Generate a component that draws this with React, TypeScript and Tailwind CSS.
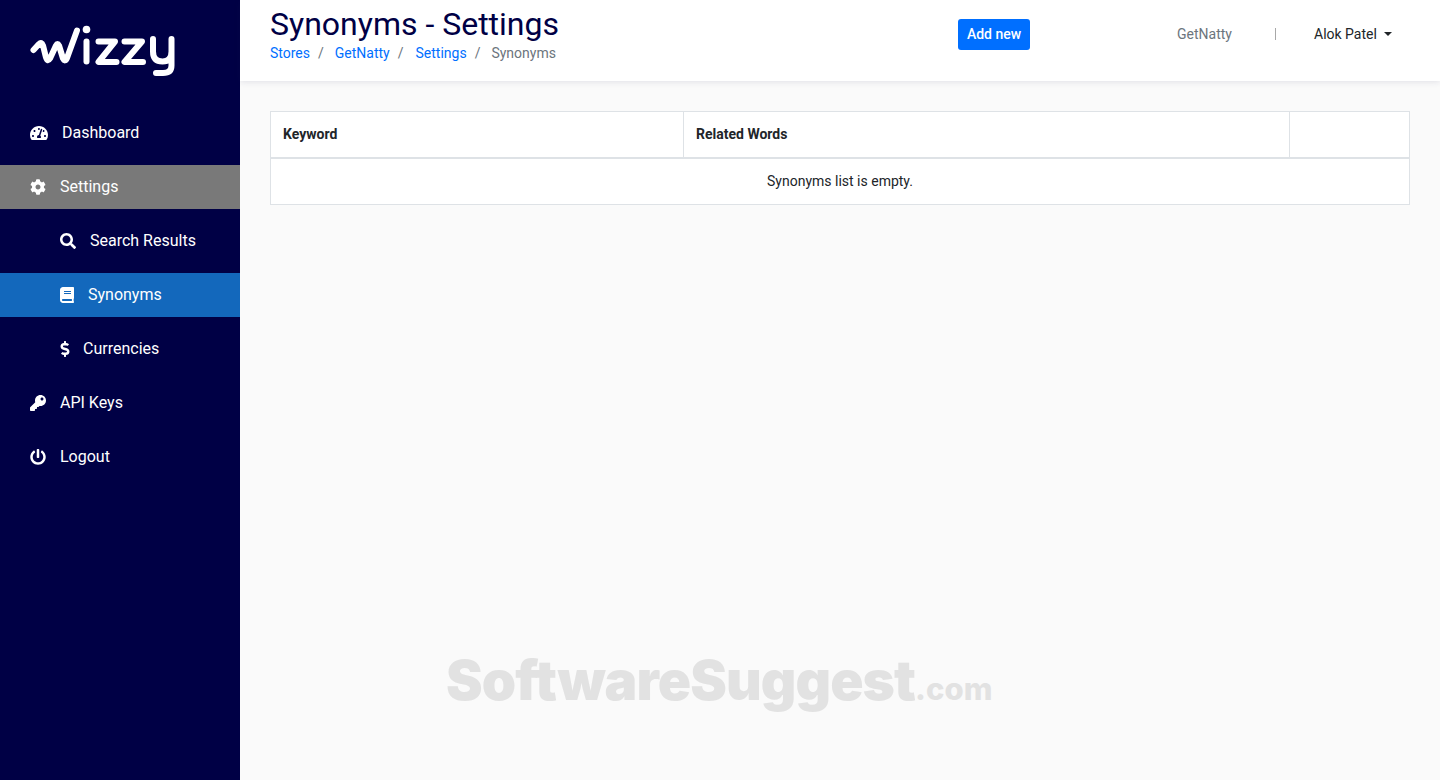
import { FaBook, FaCog, FaDollarSign, FaKey, FaPowerOff, FaSearch, FaTachometerAlt } from "react-icons/fa";

const WizzyLogo = () => {
  return (
    <svg width="240" height="80" viewBox="0 -0.5 240 80" fill="none" stroke="white" strokeWidth="6" strokeLinecap="round" strokeLinejoin="round">
      <path d="M33.500 49.500 L39 43.500 Q41.500 41 43 45 L46 57 Q47.500 62 50 58 L56 45 Q57.500 42 59 45 L63 58 Q65 62 67 57.500 L77 30" />
      <path d="M86.500 41 L86.500 61" />
      <circle cx="86.500" cy="29" r="3.800" fill="white" stroke="none" />
      <path d="M98.500 41 L115 41 L98.500 61.500 L116.500 61.500" />
      <path d="M124.500 41 L142 41 L124.500 61.500 L143 61.500" />
      <path d="M153 38.500 L153 51 Q153 61 162.500 61 Q171.500 61 171.500 51 L171.500 38.500 M171.500 50 L171.500 65 Q171.500 72.500 163 72.500 L156 72.500" />
    </svg>
  );
};

const NavItem = ({ icon, label, gap, active, sub }: { icon: React.ReactNode; label: string; gap: string; active?: string; sub?: boolean }) => {
  return (
    <a className={`flex h-11 items-center text-white text-base ${sub ? "pl-[60px]" : "pl-[30px]"} ${gap} ${active ?? ""}`}>
      {icon}
      <span>{label}</span>
    </a>
  );
};

export default function App() {
  return (
    <div className="flex h-[780px] w-[1440px] overflow-hidden bg-[#fafafa] font-['Roboto',sans-serif] text-sm text-[#212529]">
      <aside className="flex w-[240px] flex-none flex-col bg-[#000045]">
        <WizzyLogo />
        <nav className="mt-[31px] flex flex-col gap-[10px]">
          <NavItem icon={<FaTachometerAlt className="h-[18px] w-[18px]" />} label="Dashboard" gap="gap-[14px]" />
          <NavItem icon={<FaCog className="h-4 w-4" />} label="Settings" gap="gap-[14px]" active="bg-[#797979]" />
          <NavItem sub icon={<FaSearch className="h-4 w-4" />} label="Search Results" gap="gap-[14px]" />
          <NavItem sub icon={<FaBook className="h-4 w-[14px]" />} label="Synonyms" gap="gap-[14px]" active="bg-[#1368bc]" />
          <NavItem sub icon={<FaDollarSign className="h-4 w-[10px]" />} label="Currencies" gap="gap-[13px]" />
          <NavItem icon={<FaKey className="h-4 w-4" />} label="API Keys" gap="gap-[14px]" />
          <NavItem icon={<FaPowerOff className="h-4 w-4" />} label="Logout" gap="gap-[14px]" />
        </nav>
      </aside>

      <main className="relative flex min-w-0 flex-1 flex-col">
        <header className="flex h-[81px] flex-none items-start bg-white pl-[30px] shadow-[0_1px_6px_rgba(40,40,90,0.12)]">
          <div className="w-[688px] flex-none pt-[5px]">
            <h1 className="text-[32px] leading-[38px] text-[#000045]">Synonyms - Settings</h1>
            <div className="flex text-sm leading-[21px]">
              <a className="text-[#006fff]">Stores</a>
              <span className="px-2 text-[#6c757d]">/</span>
              <a className="pl-[3px] text-[#006fff]">GetNatty</a>
              <span className="px-2 text-[#6c757d]">/</span>
              <a className="pl-1 text-[#006fff]">Settings</a>
              <span className="px-2 text-[#6c757d]">/</span>
              <span className="pl-[3px] text-[#6c757d]">Synonyms</span>
            </div>
          </div>
          <button className="mt-[19px] h-[31px] w-[72px] flex-none rounded-[3px] bg-[#006fff] pb-[2px] text-sm font-medium text-white">Add new</button>
          <span className="ml-[147px] mt-[26px] w-[55px] flex-none leading-4 text-[#6c757d]">GetNatty</span>
          <span className="ml-[43px] mt-[28px] h-3 w-px flex-none bg-[#a8a8a8]" />
          <span className="ml-[38px] mt-[26px] flex flex-none items-center leading-4 text-[#212529]">
            Alok Patel
            <i className="ml-[7px] h-0 w-0 border-x-[4px] border-t-[4px] border-x-transparent border-t-[#212529]" />
          </span>
        </header>

        <div className="px-[30px] pt-[30px]">
          <table className="w-full table-fixed border-collapse border border-[#dee2e6] bg-white">
            <thead>
              <tr className="h-[46px] border-b-2 border-[#dee2e6] text-left">
                <th className="w-[413px] border-r border-[#dee2e6] px-3 font-bold">Keyword</th>
                <th className="w-[606px] border-r border-[#dee2e6] px-3 font-bold">Related Words</th>
                <th />
              </tr>
            </thead>
            <tbody>
              <tr className="h-[47px]">
                <td colSpan={3} className="text-center">Synonyms list is empty.</td>
              </tr>
            </tbody>
          </table>
        </div>

        <div className="absolute left-[206px] top-[653px] flex items-baseline whitespace-nowrap font-['Inter',sans-serif] font-black leading-none text-[#e2e2e2]">
          <span className="text-[55px] tracking-[-0.9px]">SoftwareSuggest</span>
          <span className="text-[31px] font-extrabold">.com</span>
        </div>
      </main>
    </div>
  );
}
